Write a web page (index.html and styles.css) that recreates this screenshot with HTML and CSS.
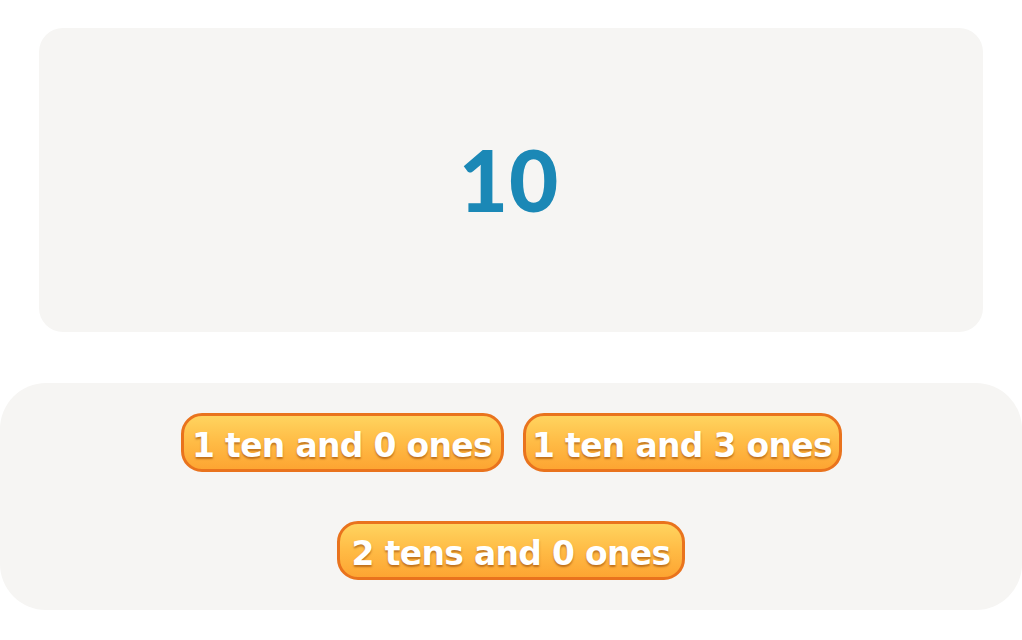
FILE: index.html
```html
<!DOCTYPE html>
<html>
<head>
<meta charset="utf-8">
<link rel="stylesheet" href="styles.css">
</head>
<body>
  <div class="prompt">
    <span class="number">10</span>
  </div>
  <div class="choices">
    <div class="row">
      <button class="choice w1">1 ten and 0 ones</button>
      <button class="choice w2">1 ten and 3 ones</button>
    </div>
    <div class="row">
      <button class="choice w3">2 tens and 0 ones</button>
    </div>
  </div>
</body>
</html>
```
FILE: styles.css
```css
html, body {
  margin: 0;
  padding: 0;
  background: #ffffff;
}
body {
  width: 1022px;
  height: 640px;
  overflow: hidden;
}
.prompt {
  margin: 28px 39px 0 39px;
  height: 304px;
  background: #f6f5f3;
  border-radius: 24px;
  display: flex;
  align-items: center;
  justify-content: center;
}
.number {
  font-family: "Lato", "DejaVu Sans", sans-serif;
  font-weight: 900;
  font-size: 85px;
  line-height: 1;
  color: #1b88b6;
  letter-spacing: 1px;
  margin-left: -4px;
  margin-top: -2px;
}
.choices {
  margin-top: 51px;
  height: 227px;
  box-sizing: border-box;
  padding: 30px 0;
  background: #f6f5f3;
  border-radius: 46px;
  display: flex;
  flex-direction: column;
  align-items: center;
  gap: 49px;
}
.row {
  display: flex;
  justify-content: center;
  gap: 19px;
}
.choice {
  box-sizing: border-box;
  height: 59px;
  padding: 5px 8px 0 8px;
  border: 3px solid #e9731d;
  border-radius: 21px;
  background: linear-gradient(to bottom, #ffd45f 0%, #ffbb45 50%, #fda532 100%);
  font-family: "DejaVu Sans", sans-serif;
  font-weight: 700;
  font-size: 33px;
  letter-spacing: -0.7px;
  color: #ffffff;
  text-shadow: 0 2px 2px rgba(140, 60, 0, 0.55);
  display: flex;
  align-items: center;
  justify-content: center;
  white-space: nowrap;
  cursor: pointer;
}
.w1 { width: 323px; }
.w2 { width: 319px; }
.w3 { width: 348px; }
```
